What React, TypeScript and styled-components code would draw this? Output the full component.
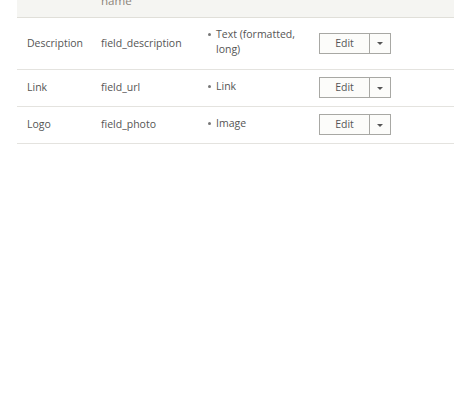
import React, { FC } from 'react';
import styled, { createGlobalStyle } from 'styled-components';

const GlobalStyle = createGlobalStyle`
  html, body {
    margin: 0;
    padding: 0;
    background: #ffffff;
  }
  body {
    font-family: 'Open Sans', 'Liberation Sans', sans-serif;
    color: #555555;
  }
`;

// the page is scrolled a little: only the foot of the header shows
const Page = styled.div`
  padding: 0 22px 0 17px;
  margin-top: -31px;
`;

const FieldTable = styled.table`
  width: 437px;
  table-layout: fixed;
  border-collapse: collapse;
  font-size: 10.5px;
  line-height: 15px;
`;

const HeadCell = styled.th<{ $width: number }>`
  width: ${p => p.$width}px;
  box-sizing: border-box;
  background: #f5f5f2;
  color: #8c8479;
  font-weight: 400;
  font-size: 11.6px;
  text-align: left;
  vertical-align: top;
  padding: 9px 10px;
  border-bottom: 1px solid #e0dfd9;
`;

const HeadText = styled.span<{ $wrap?: boolean }>`
  display: block;
  width: ${p => (p.$wrap ? 'min-content' : 'auto')};
`;

const Row = styled.tr`
  border-bottom: 1px solid #e4e3df;
`;

const Cell = styled.td`
  padding: 7px 10px 8px;
  vertical-align: middle;
  color: #555555;
`;

const TypeList = styled.ul`
  list-style: none;
  margin: 2px 0 4px;
  padding: 0;
`;

const TypeItem = styled.li`
  position: relative;
  padding-left: 8px;

  &::before {
    content: '';
    position: absolute;
    left: 0;
    top: 6px;
    width: 3px;
    height: 3px;
    border-radius: 50%;
    background: #777777;
  }
`;

const SplitButton = styled.div`
  display: inline-flex;
  height: 21px;
  box-sizing: border-box;
  border: 1px solid #a8a8a4;
  background: #fcfcfa;
  vertical-align: middle;
`;

const MainAction = styled.button`
  width: 50px;
  border: 0;
  border-right: 1px solid #a8a8a4;
  background: transparent;
  font: inherit;
  font-size: 10.5px;
  color: #555555;
  padding: 0;
  cursor: pointer;
`;

const Toggle = styled.button`
  width: 20px;
  border: 0;
  background: transparent;
  padding: 0;
  display: flex;
  align-items: center;
  justify-content: center;
  cursor: pointer;

  &::after {
    content: '';
    width: 0;
    height: 0;
    border-left: 3px solid transparent;
    border-right: 3px solid transparent;
    border-top: 3px solid #555555;
    margin-top: 1px;
  }
`;

type Field = { label: string; machine: string; type: string };

const fields: Field[] = [
  { label: 'Description', machine: 'field_description', type: 'Text (formatted, long)' },
  { label: 'Link', machine: 'field_url', type: 'Link' },
  { label: 'Logo', machine: 'field_photo', type: 'Image' },
];

const App: FC = () => (
  <>
    <GlobalStyle />
    <Page>
      <FieldTable>
        <thead>
          <tr>
            <HeadCell $width={74}>
              <HeadText>Label</HeadText>
            </HeadCell>
            <HeadCell $width={107}>
              <HeadText $wrap>Machine name</HeadText>
            </HeadCell>
            <HeadCell $width={111}>
              <HeadText>Field type</HeadText>
            </HeadCell>
            <HeadCell $width={145}>
              <HeadText>Operations</HeadText>
            </HeadCell>
          </tr>
        </thead>
        <tbody>
          {fields.map(f => (
            <Row key={f.machine}>
              <Cell>{f.label}</Cell>
              <Cell>{f.machine}</Cell>
              <Cell>
                <TypeList>
                  <TypeItem>{f.type}</TypeItem>
                </TypeList>
              </Cell>
              <Cell>
                <SplitButton>
                  <MainAction>Edit</MainAction>
                  <Toggle aria-label="More operations" />
                </SplitButton>
              </Cell>
            </Row>
          ))}
        </tbody>
      </FieldTable>
    </Page>
  </>
);

export default App;
